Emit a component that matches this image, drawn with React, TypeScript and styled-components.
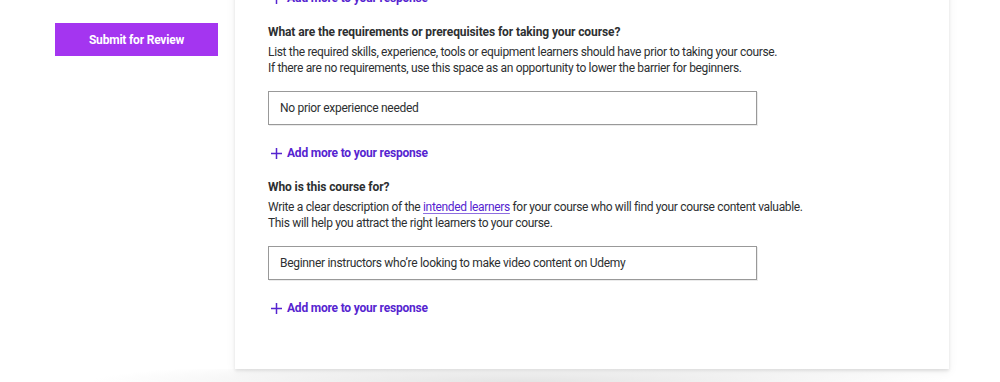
import React from "react";
import styled, { createGlobalStyle } from "styled-components";

const Global = createGlobalStyle`
  html, body { margin: 0; padding: 0; background: #fff; }
  body { font-family: Roboto, "Liberation Sans", Arial, sans-serif; color: #2d2f31; overflow: hidden; }
`;

const Page = styled.div`
  width: 1000px;
  height: 382px;
  overflow: hidden;
  display: flex;
  flex-direction: column;
`;

const Layout = styled.div`
  display: flex;
  align-items: flex-start;
`;

const Sidebar = styled.aside`
  width: 235px;
  flex: none;
  padding: 23px 0 0 55px;
  box-sizing: border-box;
`;

const SubmitButton = styled.button`
  width: 163px;
  height: 33px;
  border: none;
  background: #a435f0;
  color: #fff;
  font-family: inherit;
  font-weight: 700;
  font-size: 12px;
  letter-spacing: -0.2px;
  cursor: pointer;
`;

const Card = styled.main`
  width: 714px;
  margin-top: -14px;
  padding: 0 33px 49px;
  box-sizing: border-box;
  background: #fff;
  box-shadow: 0 2px 3px rgba(0, 0, 0, 0.1), 0 3px 10px rgba(0, 0, 0, 0.06);
`;

const AddMore = styled.button`
  display: flex;
  align-items: center;
  gap: 5px;
  height: 24px;
  padding: 0 0 0 3px;
  border: none;
  background: none;
  color: #5624d0;
  font-family: inherit;
  font-weight: 700;
  font-size: 12px;
  letter-spacing: -0.2px;
  cursor: pointer;
`;

const Section = styled.section`
  padding-top: 14px;
`;

const Question = styled.h3`
  margin: 0;
  font-size: 12px;
  font-weight: 700;
  letter-spacing: -0.1px;
  line-height: 16px;
`;

const Help = styled.p`
  margin: 4px 0 0;
  font-size: 12px;
  letter-spacing: -0.33px;
  line-height: 16px;
  color: #2d2f31;
`;

const Link = styled.a`
  color: #5624d0;
  text-decoration: underline;
  text-decoration-color: #8e6ee0;
  text-underline-offset: 2px;
`;

const Input = styled.input`
  display: block;
  box-sizing: border-box;
  width: 489px;
  height: 34px;
  margin: 15px 0 16px;
  padding: 0 11px;
  border: 1px solid #999;
  box-shadow: 1px 1px 0 rgba(0, 0, 0, 0.08);
  font-family: inherit;
  font-size: 12px;
  letter-spacing: -0.3px;
  color: #2d2f31;
  outline: none;
`;

const FooterShade = styled.div`
  flex: 1;
  background: radial-gradient(ellipse 430px 22px at 520px 100%, #e4e4e4, rgba(255, 255, 255, 0) 100%);
`;

const Plus = () => (
  <svg width="11" height="11" viewBox="0 0 11 11" fill="none" stroke="currentColor" strokeWidth="1.5">
    <path d="M5.5 0v11M0 5.5h11" />
  </svg>
);

export default function App() {
  return (
    <Page>
      <Global />
      <Layout>
        <Sidebar>
          <SubmitButton>Submit for Review</SubmitButton>
        </Sidebar>
        <Card>
          <AddMore><Plus />Add more to your response</AddMore>
          <Section>
            <Question>What are the requirements or prerequisites for taking your course?</Question>
            <Help>
              List the required skills, experience, tools or equipment learners should have prior to taking your course.
              <br />
              If there are no requirements, use this space as an opportunity to lower the barrier for beginners.
            </Help>
            <Input defaultValue="No prior experience needed" />
            <AddMore><Plus />Add more to your response</AddMore>
          </Section>
          <Section>
            <Question>Who is this course for?</Question>
            <Help>
              Write a clear description of the <Link href="#">intended learners</Link> for your course who will find your course content valuable.
              <br />
              This will help you attract the right learners to your course.
            </Help>
            <Input defaultValue="Beginner instructors who’re looking to make video content on Udemy" />
            <AddMore><Plus />Add more to your response</AddMore>
          </Section>
        </Card>
      </Layout>
      <FooterShade />
    </Page>
  );
}
